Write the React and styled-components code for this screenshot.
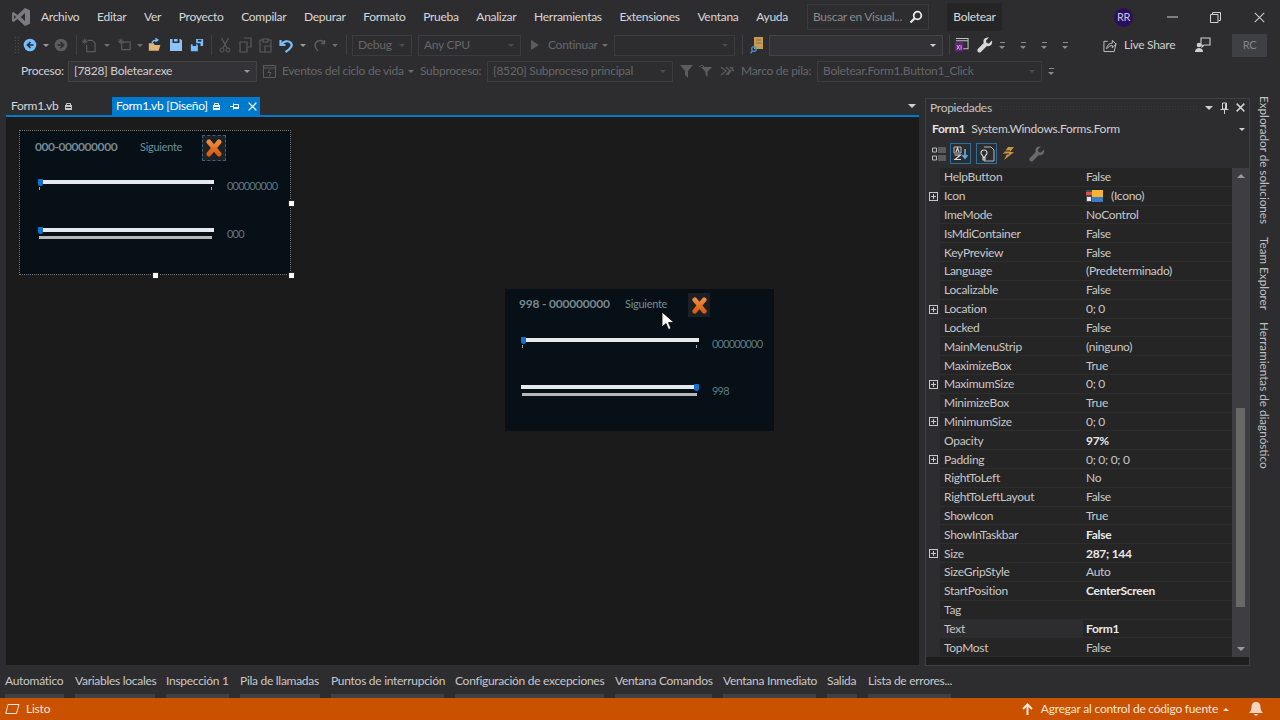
import React from "react";
import styled, { createGlobalStyle } from "styled-components";

const Global = createGlobalStyle`
  html, body { margin: 0; padding: 0; background: #2d2d30; }
  * { box-sizing: border-box; }
`;

const Root = styled.div`
  width: 1280px; height: 720px; overflow: hidden; display: flex; flex-direction: column;
  background: #2d2d30; color: #d0d0d0;
  font: 12px/16px Lato, "Noto Sans", sans-serif; letter-spacing: -0.28px;
`;

/* ---------- menu ---------- */
const MenuBar = styled.div`display: flex; align-items: center; height: 34px; padding-left: 11px;`;
const LogoSlot = styled.div`width: 30px; height: 22px; display: flex; align-items: center;`;
const MenuList = styled.nav`width: 747px; display: flex; justify-content: space-between; color: #d8d8d8;`;
const SearchBox = styled.div`
  width: 122px; height: 26px; margin-left: 19px; padding: 0 5px; display: flex; align-items: center;
  justify-content: space-between; border: 1px solid #3a3a3e; color: #8a8a8a;
`;
const ProjectName = styled.div`
  width: 55px; height: 28px; margin-left: 18px; background: #252526; display: flex; align-items: center;
  justify-content: center; color: #dcdcdc;
`;
const Avatar = styled.div`
  width: 19px; height: 19px; margin-left: 112px; border-radius: 50%; background: #2a0f5c; color: #c9c3dc;
  display: flex; align-items: center; justify-content: center; font-size: 11px;
`;

/* ---------- tool bars ---------- */
const ToolRow = styled.div`
  display: flex; align-items: center; height: ${p => p.$h}px; padding-left: ${p => p.$pad}px;
  padding-bottom: ${p => p.$pb || 0}px;
`;
const Grip = styled.div`
  width: 6px; height: 18px;
  background-image: radial-gradient(#4a4a4e 1px, transparent 1px); background-size: 3px 3px;
`;
const Slot = styled.div`
  flex: none; width: ${p => p.$w}px; margin-left: ${p => p.$ml || 0}px; height: 20px;
  display: flex; align-items: center; justify-content: center;
`;
const Sep = styled.div`
  flex: none; width: ${p => p.$w}px; margin-left: ${p => p.$ml || 0}px; height: 20px; position: relative;
  display: flex; justify-content: center;
  &::after { content: ""; width: 1px; height: 100%; background: #3f3f46; }
`;
const Tri = styled.span`
  display: inline-block; flex: none;
  width: 0; height: 0; border-left: ${p => p.$s || 3}px solid transparent; border-right: ${p => p.$s || 3}px solid transparent;
  ${p => (p.$up ? "border-bottom" : "border-top")}: ${p => p.$s || 3}px solid ${p => p.$c || "#6e6e6e"};
`;
const Label = styled.div`
  flex: none; width: ${p => p.$w}px; margin-left: ${p => p.$ml || 0}px; white-space: nowrap;
  color: ${p => (p.$dim ? "#666668" : "#d0d0d0")};
`;
const Combo = styled.div`
  flex: none; width: ${p => p.$w}px; margin-left: ${p => p.$ml || 0}px; height: 21px; padding: 0 6px 0 5px;
  display: flex; align-items: center; justify-content: space-between; white-space: nowrap;
  border: 1px solid ${p => (p.$off ? "#3c3c40" : "#434346")};
  background: ${p => (p.$off ? "transparent" : "#333337")};
  color: ${p => (p.$off ? "#666668" : "#d0d0d0")};
`;
const UserBox = styled.div`
  flex: none; width: 35px; height: 23px; margin-left: 2px; background: #3f3f46; color: #85858a;
  display: flex; align-items: center; justify-content: center; font-size: 11px;
`;
const OverflowMark = styled.span`
  display: flex; flex-direction: column; align-items: center; gap: 2px;
  &::before { content: ""; width: 5px; height: 1px; background: #8a8a8a; margin-bottom: 1px; }
`;

/* ---------- main ---------- */
const Middle = styled.div`flex: 1; min-height: 0; display: flex;`;
const DocColumn = styled.div`width: 919px; padding: 13px 0 1px 6px; display: flex; flex-direction: column;`;
const DocTabs = styled.div`height: 18px; display: flex; align-items: stretch; flex: none;`;
const DocTab = styled.div`
  display: flex; align-items: center; flex: none; white-space: nowrap; width: ${p => p.$w}px; padding-left: ${p => p.$pad}px;
  background: ${p => (p.$active ? "#007acc" : "transparent")}; color: ${p => (p.$active ? "#fff" : "#d8d8d8")};
`;
const TabSlots = styled.div`display: flex; align-items: center; margin-left: auto; margin-right: 1px;`;
const DocMenu = styled.div`margin-left: auto; margin-right: 3px; display: flex; align-items: center;`;
const Canvas = styled.div`
  position: relative; flex: 1; background: #1b1b1b; border-top: 2px solid #007acc; padding: 13px 0 0 13px;
`;
const FormFrame = styled.div`
  width: ${p => p.$w}px; height: ${p => p.$h}px; background: #071017; padding: ${p => p.$top}px 0 0 ${p => p.$left}px;
  color: #6d8790;
  ${p => p.$design && "outline: 1px dotted #7a7a7a; outline-offset: -1px; position: relative;"}
  ${p => p.$run && "position: absolute; left: 499px; top: 172px;"}
`;
const Handle = styled.span`
  position: absolute; width: 5px; height: 5px; background: #fff; border: 1px solid #222; box-sizing: content-box;
  left: ${p => p.$x}px; top: ${p => p.$y}px;
`;
const FormHead = styled.div`display: flex; align-items: center; height: ${p => p.$h}px;`;
const FormTitle = styled.div`
  width: ${p => p.$w}px; padding-bottom: 2px; font-weight: 700; font-size: 12px; letter-spacing: ${p => p.$ls}px;
  color: #75898f; white-space: nowrap;
`;
const FormLink = styled.div`width: ${p => p.$w}px; padding-bottom: 2px; font-size: 11px; color: #6f8f96;`;
const CloseBox = styled.div`
  width: ${p => p.$w}px; height: 100%; display: flex; align-items: center; justify-content: center;
  ${p => (p.$design ? "border: 1px dashed #46606e; background: #1a2228;" : "background: #1c2024;")}
`;
const SliderRow = styled.div`
  display: flex; height: 20px; margin-top: ${p => p.$mt}px; margin-left: ${p => p.$ml}px;
`;
const SliderTrack = styled.div`position: relative; width: ${p => p.$w}px; height: 100%;`;
const Bar = styled.div`
  position: absolute; left: 0; right: 0; top: 4px; height: 4px; background: #e6eaf0;
`;
const SubBar = styled.div`
  position: absolute; left: 1px; right: 2px; top: 12px; height: 3px; background: #b8b8b8;
`;
const Thumb = styled.div`
  position: absolute; top: 3px; width: 5px; height: 7px; background: #1173cf; border-radius: 1px 1px 3px 3px;
  ${p => (p.$end ? "right: 0;" : "left: 0;")}
`;
const Tick = styled.div`
  position: absolute; top: 11px; width: 1px; height: 3px; background: #a8a8a8;
  ${p => (p.$end ? "right: 2px;" : "left: 1px;")}
`;
const SliderValue = styled.div`margin-left: 13px; line-height: 20px; font-size: 11px; letter-spacing: -0.8px; color: #5f7880;`;
const Cursor = styled.svg`position: absolute; left: 655px; top: 194px;`;

/* ---------- properties ---------- */
const Panel = styled.aside`
  width: 325px; margin: 14px 0 0 6px; border: 1px solid #3f3f46; display: flex; flex-direction: column;
`;
const PanelTitle = styled.div`
  height: 20px; flex: none; padding: 0 4px 3px; display: flex; align-items: center; color: #c4c4c4;
`;
const TitleDots = styled.div`
  flex: 1; height: 5px; margin: 0 8px;
  background-image: radial-gradient(#39393d 1px, transparent 1px); background-size: 3px 3px;
`;
const PanelIcons = styled.div`display: flex; align-items: center; gap: 7px;`;
const Subject = styled.div`
  height: 20px; flex: none; padding: 0 4px 0 6px; display: flex; align-items: center; color: #d0d0d0;
  b { font-weight: 700; margin-right: 6px; color: #e4e4e4; }
`;
const SubjectDrop = styled.div`margin-left: auto; display: flex;`;
const PropTools = styled.div`height: 29px; flex: none; display: flex; align-items: center; padding-left: 1px;`;
const ToolToggle = styled.div`
  width: 21px; height: 21px; flex: none; margin-left: ${p => p.$ml || 0}px; display: flex; align-items: center; justify-content: center;
  ${p => p.$on && "border: 1px solid #2b6f9e;"}
`;
const PropGrid = styled.div`height: 489px; flex: none; display: flex;`;
const PropRows = styled.div`flex: 1; display: flex; flex-direction: column;`;
const PropRow = styled.div`
  flex: 1; display: grid; grid-template-columns: 14px 143px 1fr; align-items: stretch; min-height: 0;
`;
const Gutter = styled.div`background: #2d2d30; display: flex; align-items: center; justify-content: center;`;
const Expand = styled.span`
  width: 9px; height: 9px; border: 1px solid #c8c8c8; position: relative; display: block;
  &::before { content: ""; position: absolute; left: 1px; right: 1px; top: 3px; height: 1px; background: #c8c8c8; }
  &::after { content: ""; position: absolute; top: 1px; bottom: 1px; left: 3px; width: 1px; background: #c8c8c8; }
`;
const PropName = styled.div`
  padding: 1px 0 0 4px; display: flex; align-items: center; color: #c8c8c8; border-bottom: 1px solid #2d2d30;
  background: ${p => (p.$hot ? "#2d2d30" : "#252526")};
`;
const PropValue = styled.div`
  padding: 1px 0 0 3px; display: flex; align-items: center; gap: 8px; color: ${p => (p.$bold ? "#e8e8e8" : "#c8c8c8")};
  font-weight: ${p => (p.$bold ? 700 : 400)}; border-bottom: 1px solid #2d2d30; background: #252526;
`;
const Scroll = styled.div`
  width: 17px; flex: none; background: #3e3e42; display: flex; flex-direction: column; align-items: center; position: relative;
  justify-content: space-between; padding: 6px 0;
`;
const ScrollThumb = styled.div`
  position: absolute; left: 4px; width: 9px; top: 240px; height: 199px; background: #686868;
`;
const PanelFoot = styled.div`flex: 1; background: #1e1e1e;`;

const Rail = styled.div`
  width: 30px; padding: 12px 0 0 7px; display: flex; flex-direction: column; gap: 13px; align-items: flex-start;
`;
const RailTab = styled.div`
  writing-mode: vertical-rl; white-space: nowrap; height: ${p => p.$h}px; width: 15px; line-height: 15px; font-size: 11.7px;
  letter-spacing: 0; color: #c0c0c0;
`;

/* ---------- bottom ---------- */
const BottomTabs = styled.div`
  height: 32px; flex: none; display: flex; gap: 11px; padding: 6px 0 0 5px;
`;
const BottomTab = styled.div`
  flex: none; height: 26px; padding-top: 1px; white-space: nowrap; color: #c8c8c8; border-bottom: 4px solid #3f3f46;
  width: ${p => p.$w}px;
`;
const Status = styled.footer`
  height: 22px; flex: none; background: #ca5100; color: #f4e6da; display: flex; align-items: center; padding-left: 5px;
`;
const StatusText = styled.span`
  margin-left: ${p => p.$ml}px; white-space: nowrap; display: inline-flex; align-items: center; letter-spacing: -0.22px;
`;
const StatusRight = styled.div`margin-left: auto; display: flex; align-items: center;`;

/* ---------- icons ---------- */
const Svg = ({ w = 16, h = 16, children, ...r }) => (
  <svg width={w} height={h} viewBox={`0 0 ${w} ${h}`} fill="none" {...r}>{children}</svg>
);
const VsLogo = () => (
  <Svg w={20} h={20}>
    <path d="M14 1l5 2.2v13.6L14 19 6.5 12 2.5 15 1 14V6l1.5-1 4 3zM14 6l-4.3 4 4.3 4zM3 8v4l2-2z" fill="#7b7b80" fillRule="evenodd" />
  </Svg>
);
const Back = ({ c, dir = 1 }) => (
  <Svg w={14} h={14}>
    <circle cx="7" cy="7" r="6.3" fill={c} />
    <path d={dir > 0 ? "M10.5 7H5M7.5 4L4.5 7l3 3" : "M3.5 7H9M6.5 4l3 3-3 3"} stroke="#2d2d30" strokeWidth="1.7" />
  </Svg>
);
const Sheet = ({ star }) => (
  <Svg w={15} h={16}>
    <path d={star ? "M6 3h5l3 3v9H5V8" : "M4 5h9v8H4z"} stroke="#5c5c5f" strokeWidth="1.3" />
    <path d="M3 1v6M0 4h6M1 2l4 4M5 2L1 6" stroke="#5c5c5f" strokeWidth="1" />
  </Svg>
);
const Folder = () => (
  <Svg w={17} h={16}>
    <path d="M1 6h6l1 2h7l-2 7H1z" fill="#dcb67a" />
    <path d="M5 6c0-3 2-4 6-4M9 0l3 2-3 2" stroke="#75beff" strokeWidth="1.6" />
  </Svg>
);
const Save = () => (
  <Svg w={14} h={14}>
    <path fillRule="evenodd" d="M1 1h2.5v4h7V1h1l1.5 1.5V13H1zM5 1h3.5v2.5H5z" fill="#8cc4f5" />
  </Svg>
);
const SaveAll = () => (
  <Svg w={16} h={15}>
    <path fillRule="evenodd" d="M7 0h8v8h-3V5H7z" fill="#75beff" />
    <path fillRule="evenodd" d="M1 6h2v2h4V6h1l1 1v7H1z" fill="#75beff" />
    <path d="M9 1h4v2H9z" fill="#2d2d30" />
  </Svg>
);
const Cut = () => (
  <Svg w={12} h={16}>
    <circle cx="3" cy="13" r="2" stroke="#5c5c5f" />
    <circle cx="9" cy="13" r="2" stroke="#5c5c5f" />
    <path d="M4 11L9.5 1M8 11L2.5 1" stroke="#5c5c5f" strokeWidth="1.2" />
  </Svg>
);
const Copy = () => (
  <Svg w={13} h={16}>
    <path d="M5 1h7v9H9M1 5h7v10H1z" stroke="#5c5c5f" strokeWidth="1.2" />
  </Svg>
);
const Paste = () => (
  <Svg w={13} h={16}>
    <path d="M4 3H1v12h11V3H9M4 2h5v3H4zM6 9h6v6H6z" stroke="#5c5c5f" strokeWidth="1.1" />
  </Svg>
);
const Undo = ({ c = "#75beff", w = 2.2 }) => (
  <Svg w={15} h={15}>
    <path d="M1.500 2v5h5" stroke={c} strokeWidth={w} />
    <path d="M2 6.500C4.500 3.300 9 2.200 11.500 4.500c2.600 2.400 1 6-5 9.500" stroke={c} strokeWidth={w} />
  </Svg>
);
const Redo = () => (
  <Svg w={13} h={13}>
    <path d="M2 6a5 5 0 0 1 9-2.500M11.500 1v3.500H8M2 6c0 2 1 4 3 6" stroke="#5c5c5f" strokeWidth="1.500" />
  </Svg>
);
const Play = () => <Svg w={10} h={12}><path d="M1 1l8 5-8 5z" fill="#5c5c5f" /></Svg>;
const FindFiles = () => (
  <Svg w={14} h={17}>
    <path d="M4 0h9v12H4z" fill="#c89a54" />
    <path d="M6 3h5M6 6h5" stroke="#8a6a3a" />
    <circle cx="4" cy="12" r="2.3" stroke="#4a90d0" strokeWidth="1.3" />
    <path d="M2.4 14L.5 16.2" stroke="#4a90d0" strokeWidth="1.5" />
  </Svg>
);
const XamlWin = () => (
  <Svg w={15} h={16}>
    <path d="M1 1h13v11H7M1 3.500h13" stroke="#c0c0c0" strokeWidth="1.1" />
    <rect x="0" y="5" width="9" height="10" fill="#68217a" />
    <path d="M2 8l3 5M5 8l-3 5M6.500 8v5" stroke="#d8c8e4" strokeWidth=".9" />
  </Svg>
);
const Wrench = ({ c = "#d8d8d8", s = 16 }) => (
  <svg width={s} height={s} viewBox="0 0 16 16">
    <path d="M15 3.500l-3 3-2.500-.5L9 3.500l3-3C9.500 0 7 1 6.500 3.500c-.2 1 0 1.800.2 2.500L.8 12c-.8 1-.5 2.200.3 2.900.8.8 2 .9 2.800.1l6-6c3 1 6-1.500 5.100-5.500z" fill={c} />
  </svg>
);
const Share = () => (
  <Svg w={15} h={15}>
    <path d="M5 3H1v11h11l2-9" stroke="#c8c8c8" strokeWidth="1" />
    <path d="M4 11c0-4 3-6 6-6V2l4 4-4 4V7.500c-2 0-4 1-6 3.500z" stroke="#c8c8c8" strokeWidth="1" fill="#2d2d30" />
  </Svg>
);
const Feedback = () => (
  <Svg w={16} h={16}>
    <path d="M6 1h9v7H9l-2 2V8H6z" stroke="#d0d0d0" strokeWidth="1.100" />
    <circle cx="4" cy="8" r="2.300" fill="#d0d0d0" />
    <path d="M0 15c0-3 2-4 4-4s4 1 4 4z" fill="#d0d0d0" />
  </Svg>
);
const Funnel = ({ c = "#5c5c5f" }) => <Svg w={13} h={14}><path d="M0 1h13L8 7v7L5 11V7z" fill={c} /></Svg>;
const FunnelAlt = () => (
  <Svg w={14} h={14}>
    <path d="M2 3h11L8.500 8v5l-2-2V8z" fill="#5c5c5f" />
    <path d="M0 3l3-2 2 2" stroke="#5c5c5f" />
  </Svg>
);
const Threads = () => (
  <Svg w={15} h={12}>
    <path d="M1 2l5 4-5 4M6 2l4 4-4 4M10 2l4 4M13 2l-5 8" stroke="#5c5c5f" strokeWidth="1.300" />
  </Svg>
);
const EventIcon = () => (
  <Svg w={13} h={13}>
    <path d="M.5.5h12v12H.5zM.5 3h12" stroke="#5c5c5f" />
    <path d="M7 4.500L5 7.500h3L6 11" stroke="#5c5c5f" />
  </Svg>
);
const LockMini = ({ c = "#c8c8c8" }) => (
  <Svg w={7} h={8}>
    <path d="M1.500 3V1.500h4V3" stroke={c} />
    <path fillRule="evenodd" d="M0 3h7v5H0zM1 5v1h5V5z" fill={c} />
  </Svg>
);
const PinH = ({ c = "#fff" }) => (
  <Svg w={9} h={9}>
    <path d="M0 4.500h3M3.500 1.500v6M3.500 2.500h5v4h-5M3.500 5.500h5" stroke={c} />
  </Svg>
);
const PinV = () => (
  <Svg w={9} h={12}>
    <path d="M2.500 1h4v6h-4zM.5 7.500h8M4.500 8v4M5.500 1.500v5.500" stroke="#d0d0d0" />
  </Svg>
);
const Cross = ({ s = 9, c = "#fff", w = 1.4 }) => (
  <svg width={s} height={s} viewBox="0 0 10 10"><path d="M.7.7l8.600 8.600M9.300.7L.7 9.300" stroke={c} strokeWidth={w} fill="none" /></svg>
);
const Magnifier = () => (
  <Svg w={14} h={14}>
    <circle cx="8.500" cy="5.500" r="3.800" stroke="#e8e8e8" strokeWidth="1.800" />
    <path d="M5.700 8.300L1.500 12.500" stroke="#e8e8e8" strokeWidth="2.200" />
  </Svg>
);
const Restore = () => (
  <Svg w={11} h={11}>
    <path d="M.5 2.500h7.500v8H.5zM2.500 2V.5h8v8H8.500" stroke="#d0d0d0" />
  </Svg>
);
const Categorized = () => (
  <Svg w={14} h={14}>
    <path d="M.5 1h4v4h-4zM.5 9h4v4h-4z" stroke="#bcbcbc" />
    <path d="M6 1h8M6 3h8M6 5h8M6 9h8M6 11h8M6 13h8" stroke="#8a8a8a" />
  </Svg>
);
const Alpha = () => (
  <Svg w={15} h={15}>
    <path d="M1 1h7v6H1z" stroke="#bcbcbc" />
    <path d="M3 6l1.500-4L6 6M1.500 9h6l-5.500 4.500h6" stroke="#d8d8d8" strokeWidth="1.200" />
    <path d="M12 3v9M9.500 9l2.500 3 2.500-3" stroke="#5aa6e0" strokeWidth="1.800" />
  </Svg>
);
const PropPage = () => (
  <Svg w={16} h={16}>
    <path d="M5 1h7l3 3v11H5" stroke="#b8b8b8" />
    <path d="M2 7a3 3 0 0 1 6 0c0 2-2 2-2 4H4c0-2-2-2-2-4zM4 12h2v2H4z" stroke="#d8d8d8" strokeWidth="1.100" />
  </Svg>
);
const Bolt = () => (
  <Svg w={15} h={15}>
    <path d="M7 1h6L9 6h4L3 14l3-6H2z" fill="#c8963e" />
    <path d="M4 5l5 0M3 8l5 0" stroke="#2d2d30" />
  </Svg>
);
const IconSwatch = () => (
  <Svg w={17} h={12}>
    <rect width="17" height="12" fill="#4a4a4e" />
    <rect x="6" width="11" height="7" fill="#f2b632" />
    <rect x="0" y="2" width="6" height="3" fill="#d9534f" />
    <rect x="6" y="7" width="11" height="5" fill="#3d7bc4" />
    <rect x="1" y="7" width="4" height="4" fill="#e8e8e8" />
  </Svg>
);
const OrangeX = ({ s = 18 }) => (
  <svg width={s} height={s} viewBox="0 0 18 18">
    <defs>
      <linearGradient id="ox" x1="0" y1="0" x2="0" y2="1">
        <stop offset="0" stopColor="#f08a3c" />
        <stop offset="1" stopColor="#d95e14" />
      </linearGradient>
    </defs>
    <path d="M4 3l10 12M14 3L4 15" stroke="url(#ox)" strokeWidth="5" strokeLinecap="round" fill="none" />
  </svg>
);
const Parallelogram = () => (
  <Svg w={15} h={12}><path d="M3 1.500h11l-2.500 9H.8z" stroke="#f4e6da" strokeWidth="1" /></Svg>
);
const ArrowUp = () => (
  <Svg w={11} h={12}><path d="M5.500 12V2M1 6l4.500-4.500L10 6" stroke="#f4e6da" strokeWidth="2" /></Svg>
);
const Bell = () => (
  <Svg w={14} h={15}>
    <path d="M7 0c-3 0-4.500 2-4.500 5 0 3-1 4.500-2.500 6h14c-1.500-1.500-2.500-3-2.500-6 0-3-1.500-5-4.500-5zM5 12h4c0 2-4 2-4 0z" fill="#f0d6c0" />
  </Svg>
);

const MENU = ["Archivo", "Editar", "Ver", "Proyecto", "Compilar", "Depurar", "Formato", "Prueba", "Analizar", "Herramientas", "Extensiones", "Ventana", "Ayuda"];
const PROPS = [
  ["HelpButton", "False"], ["Icon", "(Icono)", { plus: 1, icon: 1 }], ["ImeMode", "NoControl"], ["IsMdiContainer", "False"],
  ["KeyPreview", "False"], ["Language", "(Predeterminado)"], ["Localizable", "False"], ["Location", "0; 0", { plus: 1 }],
  ["Locked", "False"], ["MainMenuStrip", "(ninguno)"], ["MaximizeBox", "True"], ["MaximumSize", "0; 0", { plus: 1 }],
  ["MinimizeBox", "True"], ["MinimumSize", "0; 0", { plus: 1 }], ["Opacity", "97%", { bold: 1 }], ["Padding", "0; 0; 0; 0", { plus: 1 }],
  ["RightToLeft", "No"], ["RightToLeftLayout", "False"], ["ShowIcon", "True"], ["ShowInTaskbar", "False", { bold: 1 }],
  ["Size", "287; 144", { plus: 1, bold: 1 }], ["SizeGripStyle", "Auto"], ["StartPosition", "CenterScreen", { bold: 1 }], ["Tag", ""],
  ["Text", "Form1", { bold: 1, hot: 1 }], ["TopMost", "False"],
];
const BOTTOM = [
  ["Automático", 59], ["Variables locales", 80], ["Inspección 1", 63], ["Pila de llamadas", 80], ["Puntos de interrupción", 113],
  ["Configuración de excepciones", 149], ["Ventana Comandos", 97], ["Ventana Inmediato", 93], ["Salida", 30], ["Lista de errores...", 83],
];

const MiniForm = ({ design, title, value, end }) => {
  const d = design;
  return (
    <FormFrame $design={d} $run={!d} $w={d ? 272 : 269} $h={d ? 145 : 142} $top={d ? 5 : 4} $left={d ? 16 : 14}>
      <FormHead $h={d ? 26 : 24}>
        <FormTitle $w={d ? 105 : 106} $ls={d ? -0.45 : -0.2}>{title}</FormTitle>
        <FormLink $w={d ? 62 : 63}>Siguiente</FormLink>
        <CloseBox $design={d} $w={d ? 24 : 22}><OrangeX s={d ? 18 : 17} /></CloseBox>
      </FormHead>
      <SliderRow $mt={d ? 15 : 17} $ml={d ? 3 : 2}>
        <SliderTrack $w={d ? 176 : 178}>
          <Bar /><Thumb /><Tick /><Tick $end />
        </SliderTrack>
        <SliderValue>000000000</SliderValue>
      </SliderRow>
      <SliderRow $mt={d ? 28 : 27} $ml={d ? 3 : 2}>
        <SliderTrack $w={d ? 176 : 178}>
          <Bar /><SubBar /><Thumb $end={end} />
        </SliderTrack>
        <SliderValue>{value}</SliderValue>
      </SliderRow>
      {d && <>
        <Handle $x={133} $y={142} /><Handle $x={269} $y={142} /><Handle $x={269} $y={70} />
      </>}
    </FormFrame>
  );
};

export default function App() {
  return (
    <Root>
      <Global />
      <MenuBar>
        <LogoSlot><VsLogo /></LogoSlot>
        <MenuList>{MENU.map(m => <span key={m}>{m}</span>)}</MenuList>
        <SearchBox><span>Buscar en Visual...</span><Magnifier /></SearchBox>
        <ProjectName>Boletear</ProjectName>
        <Avatar>RR</Avatar>
        <Slot $w={18} $ml={30}><Svg w={11} h={2}><path d="M0 1h11" stroke="#d0d0d0" /></Svg></Slot>
        <Slot $w={18} $ml={25}><Restore /></Slot>
        <Slot $w={18} $ml={26}><Cross s={11} c="#c8c8c8" w={1} /></Slot>
      </MenuBar>

      <ToolRow $h={24} $pad={14} $pb={2}>
        <Grip />
        <Slot $w={20}><Back c="#75beff" /></Slot>
        <Slot $w={12}><Tri $c="#9a9a9a" /></Slot>
        <Slot $w={18}><Back c="#5c5c5f" dir={-1} /></Slot>
        <Sep $w={12} />
        <Slot $w={14}><Sheet star /></Slot>
        <Slot $w={22}><Tri /></Slot>
        <Slot $w={14}><Sheet /></Slot>
        <Slot $w={16}><Tri /></Slot>
        <Slot $w={14}><Folder /></Slot>
        <Slot $w={28}><Save /></Slot>
        <Slot $w={14}><SaveAll /></Slot>
        <Sep $w={14} />
        <Slot $w={14}><Cut /></Slot>
        <Slot $w={26}><Copy /></Slot>
        <Slot $w={14}><Paste /></Slot>
        <Slot $w={28}><Undo /></Slot>
        <Slot $w={6}><Tri $c="#9a9a9a" /></Slot>
        <Slot $w={26}><Redo /></Slot>
        <Slot $w={6}><Tri /></Slot>
        <Sep $w={12} $ml={2} />
        <Combo $off $w={60}>Debug<Tri $c="#4c4c4e" /></Combo>
        <Combo $off $w={103} $ml={6}>Any CPU<Tri $c="#4c4c4e" /></Combo>
        <Slot $w={27}><Play /></Slot>
        <Label $dim $w={50}>Continuar</Label>
        <Slot $w={14}><Tri /></Slot>
        <Combo $off $w={121} $ml={2}><span /><Tri $c="#4c4c4e" /></Combo>
        <Sep $w={14} />
        <Slot $w={16}><FindFiles /></Slot>
        <Combo $w={174} $ml={4}><span /><Tri $c="#d0d0d0" /></Combo>
        <Sep $w={12} />
        <Slot $w={14}><XamlWin /></Slot>
        <Slot $w={24} $ml={4}><Wrench /></Slot>
        <Slot $w={10}><OverflowMark><Tri $c="#8a8a8a" /></OverflowMark></Slot>
        <Slot $w={32}><OverflowMark><Tri $c="#8a8a8a" /></OverflowMark></Slot>
        <Slot $w={10}><OverflowMark><Tri $c="#8a8a8a" /></OverflowMark></Slot>
        <Slot $w={32}><OverflowMark><Tri $c="#8a8a8a" /></OverflowMark></Slot>
        <Slot $w={14} $ml={22}><Share /></Slot>
        <Label $w={52} $ml={7}>Live Share</Label>
        <Slot $w={54}><Feedback /></Slot>
        <UserBox>RC</UserBox>
      </ToolRow>

      <ToolRow $h={26} $pad={21}>
        <Label $w={47}>Proceso:</Label>
        <Combo $w={189}>[7828] Boletear.exe<Tri $c="#9a9a9a" /></Combo>
        <Slot $w={25}><EventIcon /></Slot>
        <Label $dim $w={122}>Eventos del ciclo de vida</Label>
        <Slot $w={14}><Tri /></Slot>
        <Label $dim $w={67} $ml={2}>Subproceso:</Label>
        <Combo $off $w={186}>[8520] Subproceso principal<Tri $c="#4c4c4e" /></Combo>
        <Slot $w={26}><Funnel /></Slot>
        <Slot $w={14}><FunnelAlt /></Slot>
        <Slot $w={28}><Threads /></Slot>
        <Label $dim $w={76}>Marco de pila:</Label>
        <Combo $off $w={225}>Boletear.Form1.Button1_Click<Tri $c="#4c4c4e" /></Combo>
        <Slot $w={18}><OverflowMark><Tri $c="#8a8a8a" /></OverflowMark></Slot>
      </ToolRow>

      <Middle>
        <DocColumn>
          <DocTabs>
            <DocTab $w={106} $pad={5}>Form1.vb<Slot $w={20}><LockMini /></Slot></DocTab>
            <DocTab $active $w={148} $pad={4}>
              Form1.vb [Diseño]
              <TabSlots>
                <Slot $w={18}><LockMini c="#fff" /></Slot>
                <Slot $w={18}><PinH /></Slot>
                <Slot $w={18}><Cross /></Slot>
              </TabSlots>
            </DocTab>
            <DocMenu><Tri $s={4} $c="#d0d0d0" /></DocMenu>
          </DocTabs>
          <Canvas>
            <MiniForm design title="000-000000000" value="000" />
            <MiniForm title="998 - 000000000" value="998" end />
            <Cursor width="14" height="20" viewBox="0 0 14 20">
              <path d="M1 1v15l4-3.500 2.500 6 2.500-1-2.500-6H13z" fill="#fff" stroke="#000" strokeWidth=".8" />
            </Cursor>
          </Canvas>
        </DocColumn>

        <Panel>
          <PanelTitle>
            Propiedades
            <TitleDots />
            <PanelIcons>
              <Tri $s={4} $c="#d0d0d0" /><PinV /><Cross s={9} c="#d0d0d0" w={1.6} />
            </PanelIcons>
          </PanelTitle>
          <Subject>
            <b>Form1</b>System.Windows.Forms.Form
            <SubjectDrop><Tri $c="#d0d0d0" /></SubjectDrop>
          </Subject>
          <PropTools>
            <ToolToggle $ml={1}><Categorized /></ToolToggle>
            <ToolToggle $on $ml={1}><Alpha /></ToolToggle>
            <ToolToggle $on $ml={5}><PropPage /></ToolToggle>
            <ToolToggle $ml={1}><Bolt /></ToolToggle>
            <ToolToggle $ml={7}><Wrench c="#6a6a6a" /></ToolToggle>
          </PropTools>
          <PropGrid>
            <PropRows>
              {PROPS.map(([n, v, o = {}]) => (
                <PropRow key={n}>
                  <Gutter>{o.plus && <Expand />}</Gutter>
                  <PropName $hot={o.hot}>{n}</PropName>
                  <PropValue $bold={o.bold}>{o.icon && <IconSwatch />}{v}</PropValue>
                </PropRow>
              ))}
            </PropRows>
            <Scroll>
              <Tri $up $s={4} $c="#9a9a9a" />
              <ScrollThumb />
              <Tri $s={4} $c="#9a9a9a" />
            </Scroll>
          </PropGrid>
          <PanelFoot />
        </Panel>

        <Rail>
          <RailTab $h={128}>Explorador de soluciones</RailTab>
          <RailTab $h={72}>Team Explorer</RailTab>
          <RailTab $h={150}>Herramientas de diagnóstico</RailTab>
        </Rail>
      </Middle>

      <BottomTabs>
        {BOTTOM.map(([t, w]) => <BottomTab key={t} $w={w}>{t}</BottomTab>)}
      </BottomTabs>

      <Status>
        <Parallelogram />
        <StatusText $ml={6}>Listo</StatusText>
        <StatusRight>
          <ArrowUp />
          <StatusText $ml={8}>Agregar al control de código fuente</StatusText>
          <StatusText $ml={5}><Tri $up $c="#f4e6da" /></StatusText>
          <Slot $w={14} $ml={20}><Bell /></Slot>
          <Slot $w={17} />
        </StatusRight>
      </Status>
    </Root>
  );
}
